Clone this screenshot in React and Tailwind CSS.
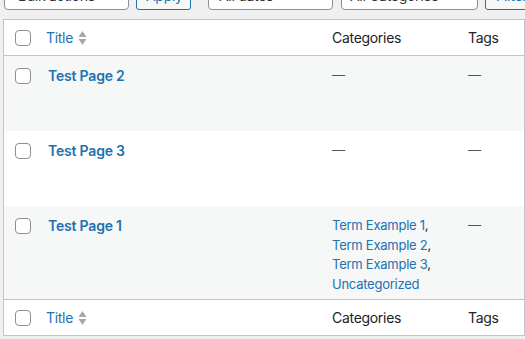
import { useState } from 'react';

const rows = [
  { id: 2, title: 'Test Page 2', cats: [], alt: true },
  { id: 3, title: 'Test Page 3', cats: [], alt: false },
  {
    id: 1,
    title: 'Test Page 1',
    cats: ['Term Example 1', 'Term Example 2', 'Term Example 3', 'Uncategorized'],
    alt: true,
  },
];

const Checkbox = () => (
  <span className="block w-4 h-4 rounded-[4px] border border-[#8c8f94] bg-white"></span>
);

const SortIcon = () => (
  <svg className="w-[9px] h-[16px] ml-[5px]" viewBox="0 0 9 16" fill="#a7aaad">
    <path d="M4.5 1 L8.5 7 H0.5 Z" />
    <path d="M4.5 15 L8.5 9 H0.5 Z" />
  </svg>
);

const HeadRow = ({ top }) => (
  <div
    className={`grid grid-cols-[32px_286px_136px_1fr] h-[36px] items-center text-[14px] tracking-[-0.3px] text-[#1d2327] bg-white ${
      top ? 'border-b border-[#c3c4c7]' : 'border-t border-[#c3c4c7]'
    }`}
  >
    <div className="pl-[11px]">
      <Checkbox />
    </div>
    <div className="pl-[10px] flex items-center text-[#2271b1]">
      Title
      <SortIcon />
    </div>
    <div className="pl-[10px]">Categories</div>
    <div className="pl-[10px]">Tags</div>
  </div>
);

export default function App() {
  const [rowsState] = useState(rows);

  return (
    <div className="w-[525px] h-[339px] overflow-hidden bg-[#f0f0f1] font-['Inter',sans-serif]">
      {/* Tablenav, mostly scrolled out of view */}
      <div className="flex items-center -mt-[20px] pl-[4px] h-[30px] text-[14px] tracking-[-0.3px] whitespace-nowrap">
        <div className="w-[125px] h-[30px] shrink-0 rounded-[4px] border border-[#8c8f94] bg-white px-[13px] flex items-center text-[#2c3338]">
          Bulk actions
        </div>
        <div className="ml-[7px] w-[55px] h-[30px] shrink-0 rounded-[3px] border border-[#2271b1] bg-[#f6f7f7] px-[9px] flex items-center text-[#2271b1]">
          Apply
        </div>
        <div className="ml-[17px] w-[125px] h-[30px] shrink-0 rounded-[4px] border border-[#8c8f94] bg-white px-[10px] flex items-center text-[#2c3338]">
          All dates
        </div>
        <div className="ml-[8px] w-[137px] h-[30px] shrink-0 rounded-[4px] border border-[#8c8f94] bg-white px-[8px] flex items-center text-[#2c3338]">
          All Categories
        </div>
        <div className="ml-[7px] w-[60px] h-[30px] shrink-0 rounded-[3px] border border-[#2271b1] bg-[#f6f7f7] px-[10px] flex items-center text-[#2271b1]">
          Filter
        </div>
      </div>

      {/* List table */}
      <div className="mt-[9px] ml-[3px] border border-[#c3c4c7] bg-white">
        <HeadRow top />
        {rowsState.map((row) => (
          <div
            key={row.id}
            className={`grid grid-cols-[32px_286px_136px_1fr] pt-[12px] ${
              row.cats.length ? 'h-[93px]' : 'h-[75px]'
            } ${row.alt ? 'bg-[#f6f7f7]' : 'bg-white'}`}
          >
            <div className="pl-[11px]">
              <Checkbox />
            </div>
            <div className="pl-[12px] text-[14px] tracking-[-0.2px] font-semibold text-[#2271b1] leading-[16px]">
              {row.title}
            </div>
            <div className="pl-[10px] text-[13px] tracking-[-0.25px] leading-[19.5px] -mt-[2px]">
              {row.cats.length ? (
                row.cats.map((c, i) => (
                  <div key={c} className="text-[#1d2327]">
                    <span className="text-[#2271b1]">{c}</span>
                    {i < row.cats.length - 1 && ','}
                  </div>
                ))
              ) : (
                <span className="text-[#50575e]">—</span>
              )}
            </div>
            <div className="pl-[10px] text-[13px] leading-[19.5px] -mt-[2px] text-[#50575e]">—</div>
          </div>
        ))}
        <HeadRow />
      </div>
    </div>
  );
}
